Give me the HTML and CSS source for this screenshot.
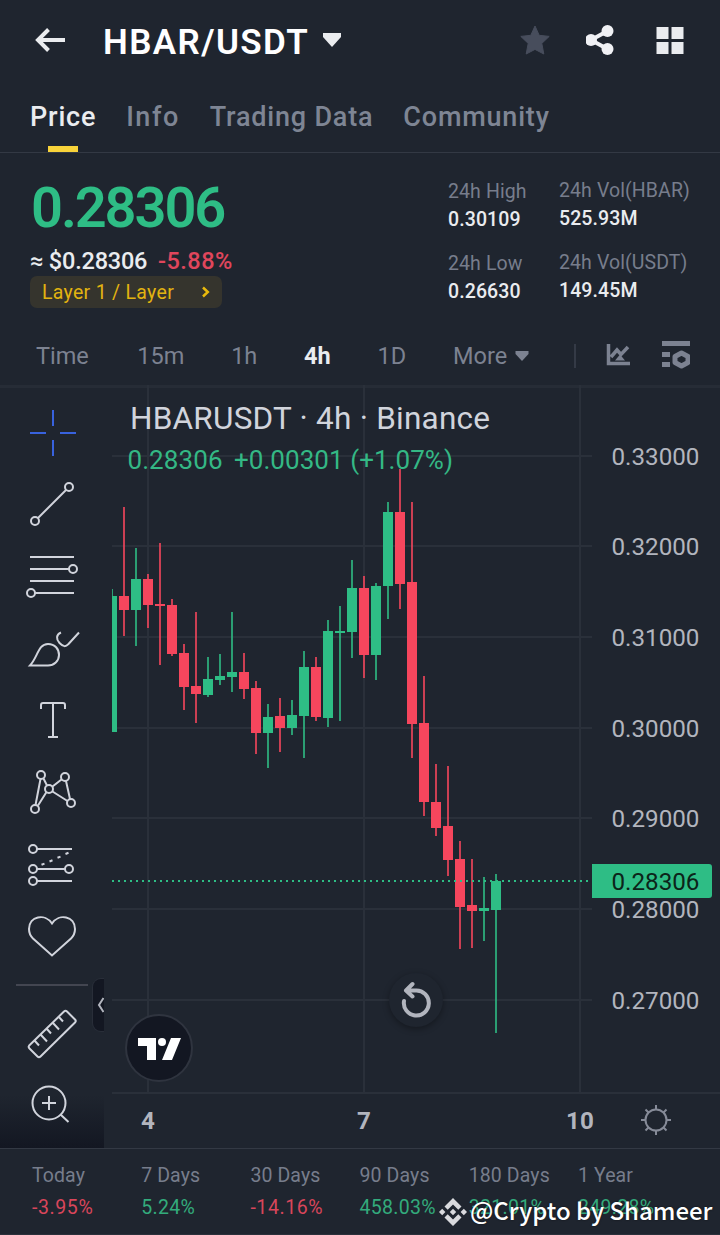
FILE: index.html
```html
<!DOCTYPE html>
<html lang="en">
<head>
    <meta charset="UTF-8">
    <meta name="viewport" content="width=device-width, initial-scale=1.0">
    <title>HBAR/USDT</title>
    <link rel="stylesheet" href="styles.css">
</head>
<body>

    <header class="header">
        <svg class="back" width="32" height="26" viewBox="0 0 32 26"><path d="M31 13H4M14.500 2.500L4 13l10.500 10.500" fill="none" stroke="#eaecef" stroke-width="4"/></svg>
        <h1>HBAR/USDT</h1>
        <svg class="caret" width="20" height="14" viewBox="0 0 20 14"><path d="M1 0h18v4l-9 10-9-10z" fill="#eaecef"/></svg>
        <div class="actions">
            <svg width="32" height="32" viewBox="0 0 32 32"><path d="M17 2l4.200 9.300 10 1.100-7.400 7 2 10.600-8.800-4.600L8.200 30l2-10.600-7.400-7 10-1.100z" fill="#474d5c" stroke="#474d5c" stroke-width="1" stroke-linejoin="round"/></svg>
            <svg width="32" height="32" viewBox="0 0 32 32"><g fill="#f0f1f5"><path d="M21.500 7L5 16l16.500 9" fill="none" stroke="#f0f1f5" stroke-width="4"/><circle cx="5" cy="16" r="6"/><circle cx="21.500" cy="7" r="6"/><circle cx="21.500" cy="25" r="6"/></g></svg>
            <svg width="32" height="32" viewBox="0 0 32 32"><path d="M2.500 3h12v12h-12zM17.500 3h12v12h-12zM2.500 18h12v12h-12zM17.500 18h12v12h-12z" fill="#eaecef"/></svg>
        </div>
    </header>

    <nav class="tabs">
        <a class="tab active">Price</a>
        <a class="tab info">Info</a>
        <a class="tab">Trading Data</a>
        <a class="tab">Community</a>
    </nav>

    <section class="summary">
        <div class="quote">
            <div class="last">0.28306</div>
            <div class="fiat">≈ $0.28306 <span class="change">-5.88%</span></div>
            <a class="tag">Layer 1 / Layer
                <svg width="8" height="12" viewBox="0 0 8 12"><path d="M1 1.500L5.800 6 1 10.500" fill="none" stroke="#e9b90c" stroke-width="2.500"/></svg>
            </a>
        </div>
        <dl class="range">
            <dt>24h High</dt><dd>0.30109</dd>
            <dt>24h Low</dt><dd>0.26630</dd>
        </dl>
        <dl class="volume">
            <dt>24h Vol(HBAR)</dt><dd>525.93M</dd>
            <dt>24h Vol(USDT)</dt><dd>149.45M</dd>
        </dl>
    </section>

    <div class="intervals">
        <span class="time">Time</span>
        <span>15m</span>
        <span>1h</span>
        <span class="current">4h</span>
        <span>1D</span>
        <span class="more">More <svg width="14" height="10" viewBox="0 0 14 10"><path d="M.5 0h13v3L7 10 .5 3z" fill="#7c8291"/></svg></span>
        <i class="divider"></i>
        <svg class="chart-icon" width="24" height="24" viewBox="0 0 24 24"><path d="M2.500 1v19.500H24M5 14l6-7 4 4.500L22 4" fill="none" stroke="#7c8291" stroke-width="3.500"/><path d="M9 17.500l5-6 5 6z" fill="#7c8291"/></svg>
        <svg class="settings-icon" width="28" height="30" viewBox="0 0 28 30"><path d="M0 0h28v5H0zM0 11h8v5H0zM0 21h8v5H0z" fill="#7c8291"/><path d="M19.500 12l6.500 3.500v6L19.500 25 13 21.500v-6z" fill="none" stroke="#7c8291" stroke-width="5" stroke-linejoin="round"/></svg>
    </div>

    <main class="workspace">
        <aside class="tools">
            <svg class="tool cross" viewBox="0 0 56 72"><path d="M6 36h16M36 36h16M29 13v16M29 43v16"/></svg>
            <svg class="tool" viewBox="0 0 56 72"><circle cx="45" cy="18" r="4"/><circle cx="11" cy="52" r="4"/><path d="M14 49l28-28"/></svg>
            <svg class="tool" viewBox="0 0 56 72"><path d="M6 16h44M6 28h39M6 40h44M11 52h39"/><circle cx="49" cy="28" r="4"/><circle cx="7" cy="52" r="4"/></svg>
            <svg class="tool" viewBox="0 0 56 72"><path d="M6 52.500C14 44 14 31 24 31c7 0 11 5 11 11 0 6-5 10.500-11 10.500zM37 19.500c-5 2-5 7-1.500 10.500 4 4 6 4 9 1L55 19.500"/></svg>
            <svg class="tool" viewBox="0 0 56 72"><path d="M17 24v-4q0-2 2-2h20q2 0 2 2v4M29 18v34M24 52h10"/></svg>
            <svg class="tool" viewBox="0 0 56 72"><path d="M16.500 22L11.500 48M19.500 21.500l3.500 7M28.500 29.500l9-7M42 24l4 18M28.500 34.500l15 9.500M22.500 35L14 48.500"/><circle cx="17" cy="18" r="4"/><circle cx="41" cy="20" r="4"/><circle cx="25" cy="32" r="4"/><circle cx="47" cy="46" r="4"/><circle cx="11" cy="52" r="4"/></svg>
            <svg class="tool" viewBox="0 0 56 72"><path d="M13 20h35M13 40h28M13 52h35"/><circle cx="9" cy="20" r="4"/><circle cx="9" cy="40" r="4"/><circle cx="45" cy="40" r="4"/><circle cx="9" cy="52" r="4"/><path d="M17.500 35.800l3-1.200M25.500 32.500l3-1.200M33.500 28.800l3-1.200M41.500 25l3-1.200"/></svg>
            <svg class="tool" viewBox="0 0 56 72"><path d="M28 22.500C21 12 5 15 5 28c0 4 1.500 7 4 9.500L28 54.500l19-17c2.500-2.500 4-5.500 4-9.500 0-13-16-16-23-5.500z"/></svg>
            <hr>
            <svg class="tool" viewBox="0 0 56 72"><path d="M5.200 47.500L40 13.500q1.500-1.500 3 0l8 8q1.500 1.500 0 3L16.500 58.500q-1.500 1.500-3 0l-8-8q-1.500-1.500-.3-3zM10.500 42.500l4.500 5M16.500 36.500l6.500 7M22.500 30.500l4.500 5M28.500 24.500l6.500 7M34.500 18.500l4.500 5"/></svg>
            <svg class="tool" viewBox="0 0 56 72"><circle cx="25" cy="33" r="16.500"/><path d="M18 33h14M25 26v14M36.500 44.500l8 7.500"/></svg>
            <div class="collapse"><svg width="8" height="18" viewBox="0 0 8 18"><path d="M7.500 2L3 9l4.500 7" fill="none" stroke="#b2b5be" stroke-width="2"/></svg></div>
        </aside>

        <svg class="chart" width="616" height="763" viewBox="104 385 616 763">
            <g class="grid">
                <path d="M112 456h480M112 546h480M112 637h480M112 728h480M112 818h480M112 909h480M112 1000h480"/>
                <path d="M148 385v708M364 385v708M580 385v708"/>
                <path d="M112 1093h608"/>
            </g>
            <g id="candles"></g>
            <path class="last-line" d="M112 881h480"/>

            <text class="symbol" x="130" y="429" textLength="360">HBARUSDT · 4h · Binance</text>
            <text class="delta" x="127.500" y="469" textLength="95">0.28306</text>
            <text class="delta" x="234" y="469" textLength="219">+0.00301 (+1.07%)</text>

            <g class="prices">
                <text x="611.500" y="465">0.33000</text>
                <text x="611.500" y="555">0.32000</text>
                <text x="611.500" y="646">0.31000</text>
                <text x="611.500" y="737">0.30000</text>
                <text x="611.500" y="827">0.29000</text>
                <text x="611.500" y="918">0.28000</text>
                <text x="611.500" y="1009">0.27000</text>
            </g>
            <path d="M592 864h117q3 0 3 3v28q0 3-3 3H592z" fill="#2ebd85"/>
            <text class="last-price" x="611.500" y="890">0.28306</text>

            <g class="dates">
                <text x="148" y="1129">4</text>
                <text x="364" y="1129">7</text>
                <text x="580" y="1129">10</text>
            </g>
            <g fill="none" stroke="#868b98" stroke-width="2">
                <circle cx="656" cy="1120" r="10.500"/>
                <path d="M656 1105v4M656 1131v4M641 1120h4M667 1120h4M645.500 1109.500l3 3M663.500 1127.500l3 3M666.500 1109.500l-3 3M648.500 1127.500l-3 3"/>
            </g>

            <circle class="reset" cx="416" cy="1000" r="27"/>
            <path d="M404 1001a12.500 12.500 0 1 0 12-10.500h-8M412.500 984l-6.500 6.500 6.500 6" fill="none" stroke="#b2b5be" stroke-width="4" stroke-linecap="round" stroke-linejoin="round"/>

            <circle cx="159" cy="1048" r="33" fill="#131722" stroke="#2f343f" stroke-width="2"/>
            <path d="M138 1038h18v22h-9v-14h-9zM171 1038h10l-9 22h-10z" fill="#fff"/>
            <circle cx="162" cy="1042" r="4" fill="#fff"/>
        </svg>
    </main>

    <footer class="performance">
        <div class="period"><span>Today</span><b class="down">-3.95%</b></div>
        <div class="period"><span>7 Days</span><b>5.24%</b></div>
        <div class="period"><span>30 Days</span><b class="down">-14.16%</b></div>
        <div class="period"><span>90 Days</span><b>458.03%</b></div>
        <div class="period"><span>180 Days</span><b>321.01%</b></div>
        <div class="period"><span>1 Year</span><b>249.28%</b></div>
        <div class="watermark">
            <svg width="28" height="28" viewBox="0 0 28 28"><path d="M14 0l8.500 8.500-3.200 3.200L14 6.400l-5.300 5.300-3.200-3.200zM14 28l-8.500-8.500 3.200-3.200 5.300 5.300 5.300-5.300 3.200 3.200zM3.200 10.800L6.400 14l-3.200 3.200L0 14zM24.800 10.800L28 14l-3.200 3.200-3.200-3.200zM14 10.800l3.200 3.200-3.200 3.200-3.200-3.200z" fill="#d9dade"/></svg>
            <span>@Crypto by Shameer</span>
        </div>
    </footer>

    <script src="script.js"></script>
</body>
</html>
```
FILE: styles.css
```css
* { box-sizing: border-box; margin: 0; padding: 0; }

body {
    width: 720px;
    height: 1235px;
    overflow: hidden;
    background: #1f252f;
    color: #eaecef;
    font-family: Roboto, "Liberation Sans", sans-serif;
}

svg { display: block; flex: none; }

.header {
    display: flex;
    align-items: center;
    height: 80px;
    padding: 0 34px;
}

.header h1 {
    width: 205px;
    margin: 5px 0 0 37px;
    font-size: 35px;
    font-weight: 600;
    letter-spacing: 1.4px;
    line-height: 40px;
    white-space: nowrap;
    color: #fff;
}

.caret { margin-left: 14px; }
.actions { display: flex; gap: 36px; margin-left: auto; }

.tabs {
    display: flex;
    gap: 30px;
    height: 73px;
    padding: 0 30px;
    border-bottom: 1px solid #333944;
}

.tab {
    display: flex;
    flex-direction: column;
    align-items: center;
    padding-top: 20px;
    font-size: 27px;
    font-weight: 500;
    letter-spacing: 0.8px;
    line-height: 34px;
    color: #7e8594;
}

.tab.info { letter-spacing: 1.5px; }
.tab.active { color: #eaecef; }
.tab.active::after {
    content: "";
    width: 30px;
    height: 6px;
    margin-top: 12px;
    background: #f8d33a;
}

.summary {
    display: flex;
    height: 172px;
    padding: 0 30px;
}

.quote { width: 418px; padding-top: 25px; }

.last {
    margin-left: 1px;
    font-size: 56px;
    font-weight: 600;
    line-height: 60px;
    letter-spacing: -2.1px;
    color: #2ebd85;
}

.fiat {
    margin-top: 9px;
    font-size: 23.5px;
    font-weight: 500;
    line-height: 28px;
    letter-spacing: -0.2px;
}

.change {
    margin-left: 5px;
    letter-spacing: 0.5px;
    color: #e0465c;
}

.tag {
    display: flex;
    align-items: center;
    justify-content: space-between;
    width: 192px;
    height: 32px;
    margin-top: 1px;
    padding: 0 12px;
    border-radius: 7px;
    background: #35342d;
    font-size: 19.5px;
    letter-spacing: 0.3px;
    color: #e2b310;
}

.range, .volume {
    font-size: 19.5px;
    letter-spacing: 0.1px;
    white-space: nowrap;
}

.range { width: 111px; padding-top: 25px; }
.volume { padding-top: 24px; }
.range dt, .volume dt { line-height: 28px; color: #777d8c; }
.range dd, .volume dd {
    margin-bottom: 16px;
    font-weight: 500;
    line-height: 28px;
}

.intervals {
    display: flex;
    align-items: center;
    height: 60px;
    padding: 2px 30px 0 36px;
    font-size: 23.5px;
    color: #7c8291;
}

.intervals span { margin-right: 46.8px; white-space: nowrap; }
.intervals .time { margin-right: 48.5px; }
.intervals .current { font-weight: 700; color: #eaecef; }
.intervals .more { display: flex; align-items: center; gap: 8px; margin-right: 45px; }
.divider { width: 2px; height: 24px; margin-right: 30px; background: #343a46; }
.chart-icon { margin-top: -3px; }
.settings-icon { margin-left: auto; }

.workspace {
    display: flex;
    height: 763px;
    box-shadow: inset 0 3px #262c36;
}

.tools {
    position: relative;
    width: 104px;
    padding-top: 12px;
    background: linear-gradient(transparent 710px, #131722 763px);
}

.tool {
    width: 56px;
    height: 72px;
    margin-left: 24px;
    fill: none;
    stroke: #d1d4dc;
    stroke-width: 2;
}

.cross { stroke: #3862de; }

.tools hr {
    width: 72px;
    height: 2px;
    margin: 11px 16px 12px;
    border: none;
    background: #434651;
}

.collapse {
    position: absolute;
    top: 594px;
    right: 0;
    display: flex;
    align-items: center;
    justify-content: flex-end;
    width: 11px;
    height: 52px;
    border-radius: 8px 0 0 8px;
    background: #131722;
    box-shadow: 0 0 0 1px #292e39;
    clip-path: inset(-2px 0 -2px -2px);
}

.chart { font-size: 24.2px; }
.grid { fill: none; stroke: #2a303a; stroke-width: 2; }
.up { fill: #2ebd85; }
.down { fill: #f6465d; }
.wick { opacity: 0.8; }
.last-line { stroke: #2ebd85; stroke-width: 2; stroke-dasharray: 2 4; }
.symbol { font-size: 31.5px; fill: #d1d4dc; }
.delta { font-size: 26px; fill: #34b885; }
.prices { fill: #b2b5be; }
.last-price { fill: #0c2419; }
.dates { font-weight: 700; text-anchor: middle; fill: #b2b5be; }
.reset { fill: #1f252f; filter: drop-shadow(0 2px 3px rgba(0, 0, 0, 0.35)); }

.performance {
    position: relative;
    display: flex;
    height: 87px;
    padding: 13px 0 0 32px;
    border-top: 1px solid #333944;
    border-bottom: 1px solid #2b303b;
}

.period {
    width: 109.2px;
    font-size: 19.5px;
    line-height: 28px;
    letter-spacing: 0.1px;
    white-space: nowrap;
    color: #777d8c;
}

.period b {
    display: block;
    margin-top: 4px;
    font-weight: 400;
    letter-spacing: 0.3px;
    color: #33ab7c;
}

.period .down { letter-spacing: 0.6px; color: #d9465b; }

.watermark {
    position: absolute;
    top: 43px;
    left: 439px;
    display: flex;
    align-items: center;
    gap: 3px;
    height: 40px;
    font-family: "Noto Sans CJK SC", "Noto Sans", sans-serif;
    font-size: 24px;
    font-weight: 500;
    white-space: nowrap;
    color: #fff;
    text-shadow: 0 0 2px rgba(0, 0, 0, 0.6);
}

.watermark span { margin-top: -5px; }
```
FILE: script.js
```js
// x, high, open/close top, open/close bottom, low, direction
const candles = [
    [112, 589, 596, 732, 732, 'up'],
    [124, 507, 596, 610, 636, 'down'],
    [136, 548, 579, 610, 646, 'up'],
    [148, 574, 579, 605, 628, 'down'],
    [160, 543, 604, 606, 665, 'down'],
    [172, 599, 605, 654, 656, 'down'],
    [184, 644, 653, 687, 710, 'down'],
    [196, 612, 686, 694, 723, 'down'],
    [208, 657, 679, 695, 697, 'up'],
    [220, 654, 676, 680, 685, 'up'],
    [232, 612, 672, 677, 692, 'up'],
    [244, 653, 672, 689, 699, 'down'],
    [256, 681, 688, 733, 754, 'down'],
    [268, 704, 717, 733, 768, 'up'],
    [280, 698, 716, 728, 752, 'down'],
    [292, 700, 715, 728, 735, 'up'],
    [304, 651, 667, 716, 758, 'up'],
    [316, 657, 667, 717, 721, 'down'],
    [328, 620, 631, 718, 727, 'up'],
    [340, 606, 631, 633, 721, 'up'],
    [352, 560, 588, 632, 658, 'up'],
    [364, 576, 588, 655, 678, 'down'],
    [376, 583, 586, 655, 680, 'up'],
    [388, 502, 512, 586, 619, 'up'],
    [400, 469, 512, 584, 609, 'down'],
    [412, 502, 582, 724, 758, 'down'],
    [424, 676, 723, 802, 816, 'down'],
    [436, 764, 802, 828, 836, 'down'],
    [448, 766, 826, 860, 876, 'down'],
    [460, 841, 859, 907, 949, 'down'],
    [472, 859, 905, 911, 948, 'down'],
    [484, 877, 908, 911, 941, 'up'],
    [496, 874, 881, 910, 1033, 'up']
];

const PLOT_LEFT = 112;
const group = document.getElementById('candles');

function addRect(x1, x2, y1, y2, cls) {
    const rect = document.createElementNS('http://www.w3.org/2000/svg', 'rect');
    const left = Math.max(x1, PLOT_LEFT);
    rect.setAttribute('x', left);
    rect.setAttribute('y', y1);
    rect.setAttribute('width', x2 - left);
    rect.setAttribute('height', y2 - y1);
    rect.setAttribute('class', cls);
    group.appendChild(rect);
}

candles.forEach(([x, high, top, bottom, low, dir]) => {
    addRect(x - 1, x + 1, high, low, dir + ' wick');
    addRect(x - 5, x + 5, top, bottom, dir);
});
```
